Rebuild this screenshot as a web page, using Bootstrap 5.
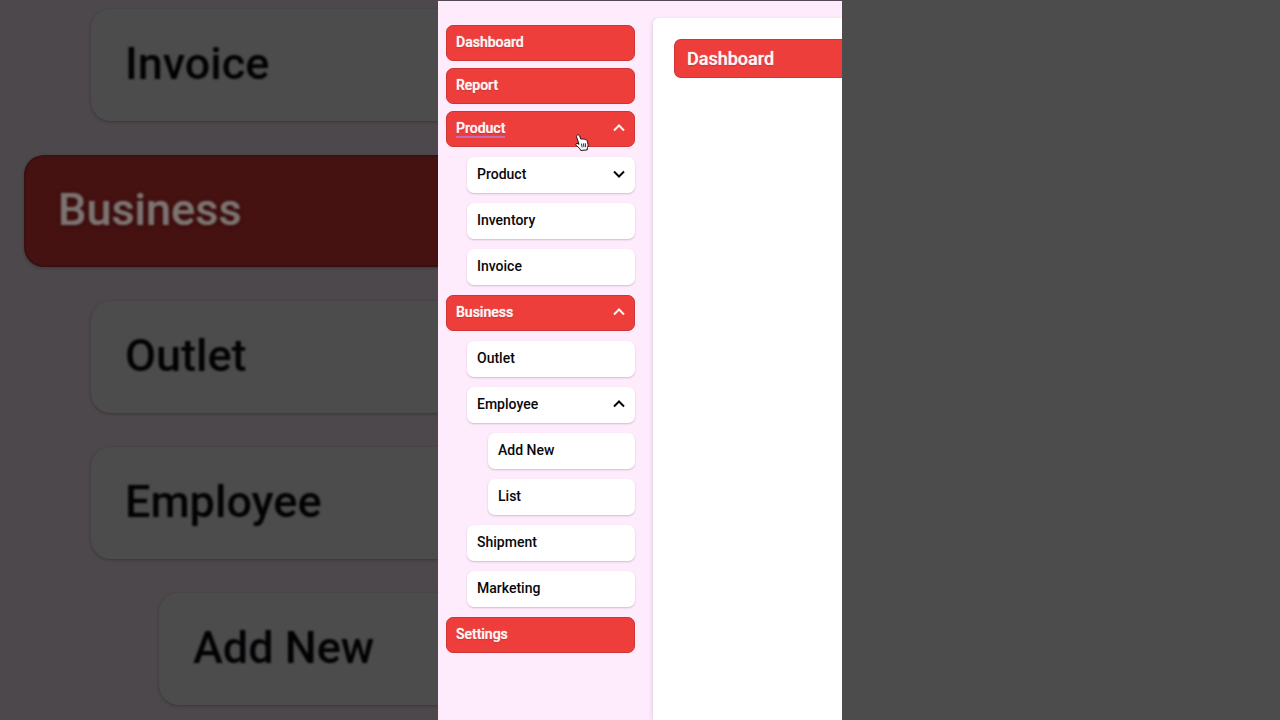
<!DOCTYPE html>
<html lang="en">
<head>
<meta charset="utf-8">
<meta name="viewport" content="width=device-width, initial-scale=1">
<title>Dashboard</title>
<link href="https://cdn.jsdelivr.net/npm/bootstrap@5.3.0/dist/css/bootstrap.min.css" rel="stylesheet">
<style>
  body { font-family: Roboto, "Liberation Sans", sans-serif; background: #4c4c4c; }
  .stage { display: grid; grid-template-columns: 219fr 202fr 219fr; }

  /* dimmed, enlarged copy of the menu at the left */
  .backdrop { background: #4d484c; contain: size; }
  .ghost { height: 112px; flex: none; border-radius: 20px 0 0 20px; padding: 0 0 3px 34px; background: #4c4c4c; color: #020204; font-size: 45px; font-weight: 500; box-shadow: 0 1px 3px rgba(40, 34, 38, .5); }
  .ghost span { filter: blur(1px); }
  .ghost-list { gap: 34px; padding: 9px 0 0 24px; }
  .ghost-red { background: #461111; color: #7d7472; border: 2px solid #3a1010; border-right: 0; padding-left: 32px; text-shadow: 0 0 1px #7d7472, 0 1px 4px #2a0808; }
  .ghost-sub { margin-left: 67px; }
  .ghost-deep { margin-left: 135px; }

  .app { background: #feecfc; border-top: 1px solid #534b51; }
  .side { width: 215px; padding: 24px 18px 24px 8px; }
  .menu { gap: 7px; }
  .submenu { gap: 10px; padding-left: 21px; margin: 10px 0 3px; }
  .submenu .submenu { margin-bottom: 0; }
  .item { width: 100%; height: 36px; padding: 0 9px 2px; border: 1px solid transparent; border-radius: 7px; background: #fff; color: #08080c; font-size: 14px; font-weight: 500; line-height: 18px; text-decoration: none; box-shadow: 0 1px 2px rgba(90, 60, 85, .28); }
  .red { background: #ee3e3c; color: #fff3f0; border-color: #d03533; text-shadow: 0 0 1px #fff3f0, 0 1px 1px rgba(90, 0, 0, .4); box-shadow: none; }
  .item svg { width: 12px; height: 8px; fill: none; stroke: currentColor; stroke-width: 2; }
  .current { line-height: 16px; box-shadow: 0 2px #c66cb4; }
  .item .hand { position: absolute; left: 128px; top: 22px; width: 14px; height: 17px; stroke: none; z-index: 2; }

  .panel { margin-top: 17px; padding: 21px 0 0 21px; background: #fff; border-top-left-radius: 6px; box-shadow: -1px 1px 4px rgba(120, 80, 115, .18); }
  .heading { height: 39px; padding-left: 12px; border: 1px solid #d03533; border-right: 0; border-radius: 7px 0 0 7px; font-size: 18px; font-weight: 500; }
</style>
</head>
<body>
<div class="stage min-vh-100">
  <div class="backdrop overflow-hidden" aria-hidden="true">
    <div class="ghost-list d-flex flex-column">
      <div class="ghost ghost-sub d-flex align-items-center"><span>Invoice</span></div>
      <div class="ghost ghost-red d-flex align-items-center"><span>Business</span></div>
      <div class="ghost ghost-sub d-flex align-items-center"><span>Outlet</span></div>
      <div class="ghost ghost-sub d-flex align-items-center"><span>Employee</span></div>
      <div class="ghost ghost-deep d-flex align-items-center"><span>Add New</span></div>
    </div>
  </div>

  <div class="app d-flex overflow-hidden">
    <nav class="side flex-shrink-0" aria-label="Main">
      <ul class="menu list-unstyled d-flex flex-column mb-0">
        <li><a href="#" class="item red d-flex align-items-center">Dashboard</a></li>
        <li><a href="#" class="item red d-flex align-items-center">Report</a></li>
        <li>
          <button type="button" class="item red position-relative d-flex align-items-center justify-content-between" aria-expanded="true">
            <span class="current">Product</span>
            <svg viewBox="0 0 12 8"><path d="M1 6.5 6 1.5l5 5"/></svg>
            <svg class="hand" viewBox="0 0 14 17"><path d="M2.2 1.1C3.2.4 4.2 1 4.6 2l1.3 3.2c.7-.6 1.6-.4 2 .2.8-.6 1.7-.4 2.2.3 1.2-.3 2 .3 2.2 1.5l.8 3.3c.2 1.3-.2 2.1-.7 3.1l-.2 2.3-6.4.6-.9-1.8-3.5-3.2c-1.3-1.2.1-2.8 1.6-1.8l1 .6L1.6 3C1.3 2.2 1.5 1.5 2.2 1.1Z" fill="#fff" stroke="#171317" stroke-width="1"/><path d="m6.5 9.6.6 3.8m1.3-4 .6 3.8m1.2-4 .5 3.8" stroke="#293039" stroke-width="1"/></svg>
          </button>
          <ul class="submenu list-unstyled d-flex flex-column">
            <li><button type="button" class="item d-flex align-items-center justify-content-between" aria-expanded="false">Product<svg viewBox="0 0 12 8"><path d="m1 1.5 5 5 5-5"/></svg></button></li>
            <li><a href="#" class="item d-flex align-items-center">Inventory</a></li>
            <li><a href="#" class="item d-flex align-items-center">Invoice</a></li>
          </ul>
        </li>
        <li>
          <button type="button" class="item red d-flex align-items-center justify-content-between" aria-expanded="true">Business<svg viewBox="0 0 12 8"><path d="M1 6.5 6 1.5l5 5"/></svg></button>
          <ul class="submenu list-unstyled d-flex flex-column">
            <li><a href="#" class="item d-flex align-items-center">Outlet</a></li>
            <li>
              <button type="button" class="item d-flex align-items-center justify-content-between" aria-expanded="true">Employee<svg viewBox="0 0 12 8"><path d="M1 6.5 6 1.5l5 5"/></svg></button>
              <ul class="submenu list-unstyled d-flex flex-column">
                <li><a href="#" class="item d-flex align-items-center">Add New</a></li>
                <li><a href="#" class="item d-flex align-items-center">List</a></li>
              </ul>
            </li>
            <li><a href="#" class="item d-flex align-items-center">Shipment</a></li>
            <li><a href="#" class="item d-flex align-items-center">Marketing</a></li>
          </ul>
        </li>
        <li><a href="#" class="item red d-flex align-items-center">Settings</a></li>
      </ul>
    </nav>
    <main class="panel flex-grow-1">
      <h1 class="heading red d-flex align-items-center mb-0">Dashboard</h1>
    </main>
  </div>
</div>
<script src="https://cdn.jsdelivr.net/npm/bootstrap@5.3.0/dist/js/bootstrap.bundle.min.js"></script>
</body>
</html>
